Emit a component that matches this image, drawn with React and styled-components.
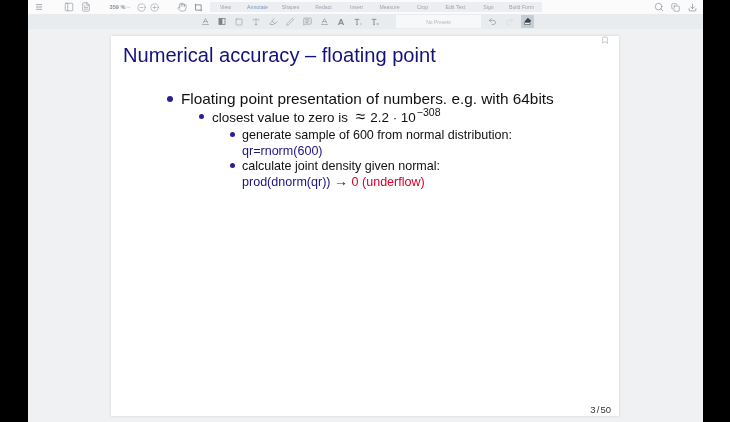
import React from 'react';
import styled, { createGlobalStyle } from 'styled-components';
import {
  Menu, PanelLeft, FileText, CircleMinus, CirclePlus, Hand, Search, Copy, Download,
  Baseline, Square, Type, Highlighter, Pen, MessageSquareText, Undo2, Redo2, Bookmark, ChevronDown,
} from 'lucide-react';

const GlobalStyle = createGlobalStyle`
  html, body { margin: 0; padding: 0; background: #000; }
  body { font-family: "Liberation Sans", Arial, sans-serif; }
`;

// ================= style ======================= //
const Screen = styled.div`
  width: 730px;
  height: 422px;
  display: flex;
  overflow: hidden;
  background: #000;
`;

const Side = styled.div`
  width: ${(props) => props.$w}px;
  flex: none;
`;

const Main = styled.div`
  flex: 1;
  display: flex;
  flex-direction: column;
  min-width: 0;
`;

const TopBar = styled.div`
  height: 14px;
  flex: none;
  display: flex;
  align-items: center;
  padding: 0 2px;
  background: #fbfbfc;
  color: #7c8188;
  filter: blur(0.3px);
`;

const SubBar = styled.div`
  height: 15px;
  flex: none;
  display: flex;
  align-items: center;
  padding-left: 168.5px;
  background: #e9ecef;
  color: #7c8188;
  filter: blur(0.3px);
`;

const Slot = styled.div`
  width: ${(props) => props.$w || 17}px;
  height: 13px;
  margin-left: ${(props) => props.$ml || 0}px;
  flex: none;
  display: flex;
  align-items: center;
  justify-content: center;
  border-radius: 1px;
  background: ${(props) => (props.$active ? '#c6cdd5' : 'transparent')};
  color: ${(props) => (props.$active ? '#4e545c' : props.$dim ? '#d0d3d7' : 'inherit')};
  svg { display: block; }
`;

const Zoom = styled.div`
  width: 27px;
  margin-left: 13px;
  flex: none;
  display: flex;
  align-items: center;
  justify-content: center;
  gap: 1px;
  font-size: 5.6px;
  font-weight: 700;
  color: #8a8f96;
`;

const Tabs = styled.div`
  display: grid;
  grid-template-columns: 31px repeat(9, 33px);
  height: 10px;
  margin-left: 3px;
  padding-right: 4px;
  flex: none;
  align-items: center;
  background: #eceef1;
`;

const Tab = styled.div`
  text-align: center;
  font-size: 5.2px;
  white-space: nowrap;
  color: ${(props) => (props.$active ? '#7696c0' : '#9ea3a9')};
`;

const RightTools = styled.div`
  margin-left: auto;
  display: flex;
`;

const Presets = styled.div`
  width: 85px;
  height: 13px;
  margin-left: 12.5px;
  flex: none;
  display: flex;
  align-items: center;
  justify-content: center;
  font-size: 5px;
  color: #b4b8bd;
  background: #f7f8f9;
`;

const Viewer = styled.div`
  flex: 1;
  display: flex;
  padding: 7px 0 0 83px;
  background: #f0f1f3;
`;

const Page = styled.div`
  position: relative;
  width: 508px;
  height: 380px;
  flex: none;
  display: flex;
  flex-direction: column;
  box-sizing: border-box;
  padding: 6px 8px 0 12px;
  background: #fff;
  box-shadow: 0 0 3px rgba(0, 0, 0, 0.12);
`;

const BookmarkMark = styled.div`
  position: absolute;
  top: 0;
  right: 10px;
  display: flex;
  color: #9a9ea5;
`;

const Title = styled.h1`
  margin: 0 0 22px;
  font-size: 20.1px;
  line-height: 26px;
  font-weight: 400;
  color: #14127a;
  filter: blur(0.2px);
`;

const List = styled.div`
  display: flex;
  flex-direction: column;
  filter: blur(0.2px);
`;

const Item = styled.div`
  display: flex;
  align-items: flex-start;
  padding-left: ${(props) => props.$indent}px;
  margin-top: ${(props) => props.$top || 0}px;
  font-size: ${(props) => props.$size}px;
  line-height: ${(props) => props.$line}px;
  color: #111;
`;

const Dot = styled.span`
  flex: none;
  width: ${(props) => props.$d}px;
  height: ${(props) => props.$d}px;
  margin-top: ${(props) => props.$mt}px;
  margin-right: ${(props) => props.$mr}px;
  border-radius: 50%;
  background: #2a1f96;
`;

const Code = styled.span`
  color: #1c1480;
`;

const Red = styled.span`
  color: #d6002a;
`;

const Symbol = styled.span`
  font-size: ${(props) => props.$size}px;
  line-height: 0;
  margin-left: ${(props) => props.$ml || 0}px;
  margin-right: ${(props) => props.$mr || 0}px;
`;

const Sup = styled.sup`
  font-size: 10.5px;
  line-height: 0;
  vertical-align: 6px;
  margin-left: 1px;
`;

const Footer = styled.div`
  margin-top: auto;
  text-align: right;
  font-size: 9.5px;
  line-height: 12px;
  word-spacing: -1.5px;
  color: #333;
  filter: blur(0.2px);
`;

// ================= icons ======================= //
const SelectIcon = () => (
  <svg width="9" height="9" viewBox="0 0 12 12" fill="none" stroke="currentColor" strokeWidth="1.1">
    <path d="M2 1v8.5h8.5M2 2.5h7.5V11" />
  </svg>
);

const NoteIcon = () => (
  <svg width="8" height="9" viewBox="0 0 12 12" fill="none" stroke="currentColor" strokeWidth="1.2">
    <rect x="1.5" y="1.5" width="9" height="9" />
    <path d="M2 2h4v8H2z" fill="currentColor" />
  </svg>
);

const SmallT = ({ minus }) => (
  <svg width="8" height="8" viewBox="0 0 12 12" fill="none" stroke="currentColor" strokeWidth="1.3">
    <path d="M1 2h7M4.500 2v8M3.500 10h2" />
    {minus ? <path d="M8.500 9h3" /> : <path d="M9.500 9h1.500" />}
  </svg>
);

const SolidA = () => (
  <svg width="8" height="8" viewBox="0 0 12 12" fill="currentColor">
    <path d="M5 1.500h2l3.500 9H8.700l-.7-2H4l-.7 2H1.500zM4.600 7h2.800L6 3.200z" />
  </svg>
);

const EraserIcon = () => (
  <svg width="9" height="9" viewBox="0 0 12 12">
    <path d="M6.500 1 11 5l-2.500 2.500H3.500L2 6z" fill="#3f454d" />
    <path d="M2 7.500h7.500V10H2z" fill="#fff" stroke="#3f454d" strokeWidth="0.8" />
  </svg>
);

const tabs = ['View', 'Annotate', 'Shapes', 'Redact', 'Insert', 'Measure', 'Crop', 'Edit Text', 'Sign', 'Build Form'];

const App = () => {
  const renderTabs = () => tabs.map((name) => <Tab $active={name === 'Annotate'} key={name}>{name}</Tab>);

  return (
    <Screen>
      <GlobalStyle />
      <Side $w={28} />
      <Main>
        <TopBar>
          <Slot><Menu size={8} strokeWidth={2} /></Slot>
          <Slot $ml={13}><PanelLeft size={10} strokeWidth={1.3} /></Slot>
          <Slot><FileText size={10} strokeWidth={1.3} /></Slot>
          <Zoom>359 %<ChevronDown size={5} strokeWidth={2} /></Zoom>
          <Slot $w={13} $ml={1}><CircleMinus size={9} strokeWidth={1.2} /></Slot>
          <Slot $w={13}><CirclePlus size={9} strokeWidth={1.2} /></Slot>
          <Slot $ml={12}><Hand size={10} strokeWidth={1.3} /></Slot>
          <Slot><SelectIcon /></Slot>
          <Tabs>{renderTabs()}</Tabs>
          <RightTools>
            <Slot><Search size={10} strokeWidth={1.4} /></Slot>
            <Slot><Copy size={9} strokeWidth={1.5} /></Slot>
            <Slot><Download size={9} strokeWidth={1.7} /></Slot>
          </RightTools>
        </TopBar>
        <SubBar>
          <Slot><Baseline size={9} strokeWidth={1.4} /></Slot>
          <Slot><NoteIcon /></Slot>
          <Slot><Square size={8} strokeWidth={1.4} /></Slot>
          <Slot><Type size={8} strokeWidth={1.4} /></Slot>
          <Slot><Highlighter size={9} strokeWidth={1.4} /></Slot>
          <Slot><Pen size={8} strokeWidth={1.4} /></Slot>
          <Slot><MessageSquareText size={9} strokeWidth={1.4} /></Slot>
          <Slot><Baseline size={9} strokeWidth={1.4} /></Slot>
          <Slot><SolidA /></Slot>
          <Slot><SmallT /></Slot>
          <Slot><SmallT minus /></Slot>
          <Presets>No Presets</Presets>
          <Slot $ml={2.5}><Undo2 size={9} strokeWidth={1.5} /></Slot>
          <Slot $dim><Redo2 size={9} strokeWidth={1.5} /></Slot>
          <Slot $w={13} $ml={3.5} $active><EraserIcon /></Slot>
        </SubBar>
        <Viewer>
          <Page>
            <BookmarkMark><Bookmark size={8} strokeWidth={1.5} /></BookmarkMark>
            <Title>Numerical accuracy – floating point</Title>
            <List>
              <Item $indent={44} $size={15.35} $line={18}>
                <Dot $d={6} $mt={6} $mr={8} />
                <span>Floating point presentation of numbers. e.g. with 64bits</span>
              </Item>
              <Item $indent={75.5} $top={1} $size={13.45} $line={18}>
                <Dot $d={5} $mt={5} $mr={8.5} />
                <span>closest value to zero is <Symbol $size={17} $ml={4} $mr={1.500}>≈</Symbol> 2.2 · 10<Sup>−308</Sup></span>
              </Item>
              <Item $indent={106.5} $top={1} $size={12.55} $line={15.5}>
                <Dot $d={5} $mt={4} $mr={7.5} />
                <span>generate sample of 600 from normal distribution:<br /><Code>qr=rnorm(600)</Code></span>
              </Item>
              <Item $indent={106.5} $size={12.55} $line={15.5}>
                <Dot $d={5} $mt={4} $mr={7.5} />
                <span>calculate joint density given normal:<br /><Code>prod(dnorm(qr)) <Symbol $size={14}>→</Symbol> </Code><Red>0 (underflow)</Red></span>
              </Item>
            </List>
            <Footer>3 / 50</Footer>
          </Page>
        </Viewer>
      </Main>
      <Side $w={27} />
    </Screen>
  );
};

export default App;
